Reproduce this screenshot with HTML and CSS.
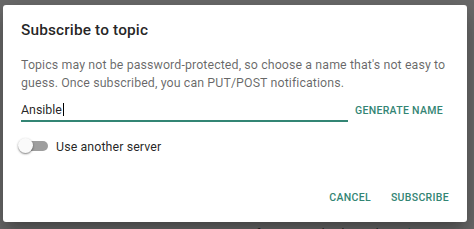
FILE: index.html
```html
<!DOCTYPE html>
<html>
<head>
<meta charset="utf-8">
<link rel="stylesheet" href="styles.css">
</head>
<body>
<div class="dialog">
  <h2 class="title">Subscribe to topic</h2>
  <div class="content">
    <p class="desc">Topics may not be password-protected, so choose a name that's not easy to guess. Once subscribed, you can PUT/POST notifications.</p>
    <div class="field-row">
      <div class="field"><span class="value">Ansible</span><span class="caret"></span></div>
      <span class="btn">Generate name</span>
    </div>
    <div class="switch-row">
      <span class="switch"><span class="track"></span><span class="thumb"></span></span>
      <span class="label">Use another server</span>
    </div>
  </div>
  <div class="actions">
    <span class="btn">Cancel</span>
    <span class="btn">Subscribe</span>
  </div>
</div>
<p class="below">For more information, check out the <span class="link">website</span> or</p>
</body>
</html>
```
FILE: styles.css
```css
html, body {
  margin: 0;
  padding: 0;
}
body {
  background: #6b6b6b;
  font-family: Roboto, "Liberation Sans", sans-serif;
  width: 474px;
  height: 229px;
  overflow: hidden;
  padding: 5px 0 0 3px;
  box-sizing: border-box;
}
.dialog {
  width: 464px;
  height: 217px;
  background: #fff;
  border-radius: 3px;
  box-shadow: 0 8px 10px -5px rgba(0,0,0,0.2), 0 16px 24px 2px rgba(0,0,0,0.14), 0 6px 30px 5px rgba(0,0,0,0.12);
  display: flex;
  flex-direction: column;
  box-sizing: border-box;
}
.title {
  margin: 0;
  padding: 13px 18px 11px;
  font-size: 15.4px;
  line-height: 24px;
  font-weight: 500;
  color: rgba(0,0,0,0.87);
  letter-spacing: 0.01em;
}
.content {
  padding: 3px 18px 0 18px;
}
.desc {
  margin: 0;
  font-size: 12.4px;
  line-height: 18px;
  color: rgba(0,0,0,0.6);
  letter-spacing: 0.008em;
}
.field-row {
  display: flex;
  align-items: center;
  margin-top: 5px;
  gap: 1px;
}
.field {
  flex: 1;
  display: flex;
  align-items: center;
  height: 18px;
  padding: 1px 0 2px;
  border-bottom: 2px solid #338574;
  font-size: 12.4px;
  color: rgba(0,0,0,0.87);
}
.caret {
  display: inline-block;
  width: 1px;
  height: 13px;
  background: #000;
  margin-left: 1px;
}
.btn {
  font-size: 10.5px;
  font-weight: 500;
  text-transform: uppercase;
  letter-spacing: 0.03em;
  color: #338574;
  padding: 4.5px 6px;
  line-height: 18px;
  white-space: nowrap;
}
.switch-row {
  display: flex;
  align-items: center;
  margin-top: 14px;
  gap: 8px;
}
.switch {
  position: relative;
  width: 30px;
  height: 16px;
  display: inline-block;
  margin-left: -3px;
}
.track {
  position: absolute;
  left: 6px;
  top: 3px;
  width: 24px;
  height: 10px;
  border-radius: 5px;
  background: #9e9e9e;
}
.thumb {
  position: absolute;
  left: 0;
  top: 0;
  width: 15px;
  height: 15px;
  border-radius: 50%;
  background: #fafafa;
  box-shadow: 0 1px 2px rgba(0,0,0,0.3), 0 1px 1px rgba(0,0,0,0.14), 0 1px 3px rgba(0,0,0,0.12);
}
.label {
  font-size: 12.4px;
  color: rgba(0,0,0,0.87);
  letter-spacing: 0.008em;
}
.actions {
  margin-top: auto;
  display: flex;
  justify-content: flex-end;
  gap: 8px;
  padding: 0 12px 11px;
}
.below {
  margin: 5px 0 0 191px;
  font-size: 12.3px;
  line-height: 14px;
  color: #1a1a1a;
  white-space: nowrap;
}
.link {
  color: #1d4a40;
}
```
